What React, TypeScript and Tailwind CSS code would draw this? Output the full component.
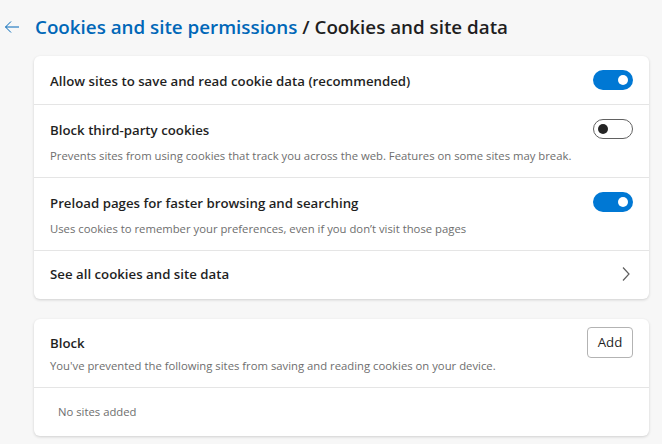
function Toggle({ on }: { on: boolean }) {
  return on ? (
    <div className="flex h-[20px] w-[40px] shrink-0 items-center justify-end rounded-full bg-[#0078d4] pr-[5px]">
      <div className="h-[10px] w-[10px] rounded-full bg-white" />
    </div>
  ) : (
    <div className="flex h-[20px] w-[40px] shrink-0 items-center rounded-full border border-[#616161] bg-white pl-[4px]">
      <div className="h-[10px] w-[10px] rounded-full bg-[#242424]" />
    </div>
  );
}

function Row({
  title,
  desc,
  on,
}: {
  title: string;
  desc?: string;
  on: boolean;
}) {
  return (
    <div
      className={
        desc
          ? "flex items-start justify-between border-b border-[#e5e5e5] px-4 pb-[13px] pt-[14px]"
          : "flex items-start justify-between border-b border-[#e5e5e5] px-4 pb-[12px] pt-[14px]"
      }
    >
      <div>
        <div className="text-[13.25px] font-semibold leading-[22px] text-[#1f1f1f]">
          {title}
        </div>
        {desc && (
          <div className="mt-[7px] text-[11.3px] leading-[16px] text-[#6e6e6e]">
            {desc}
          </div>
        )}
      </div>
      <Toggle on={on} />
    </div>
  );
}

export default function App() {
  return (
    <div
      className="h-[444px] w-full overflow-hidden bg-[#f7f7f7] pt-[13px]"
      style={{ fontFamily: '"Open Sans", sans-serif' }}
    >
      <div className="flex items-center pl-[4px]">
        <svg width="16" height="16" viewBox="0 0 16 16" className="text-[#0067b8]">
          <path
            d="M15 8H1.5M7 2.5L1.5 8L7 13.5"
            stroke="currentColor"
            strokeWidth="1"
            fill="none"
          />
        </svg>
        <h1 className="ml-[15px] text-[18.8px] font-semibold leading-[28px] text-[#1f1f1f]">
          <span className="text-[#0067b8]">Cookies and site permissions</span> / Cookies and site data
        </h1>
      </div>

      <div className="ml-[34px] mr-[13px] mt-[15px] flex flex-col gap-[20px]">
        <div className="rounded-[6px] bg-white shadow-[0_1px_3px_rgba(0,0,0,0.16)]">
          <Row title="Allow sites to save and read cookie data (recommended)" on />
          <Row
            title="Block third-party cookies"
            desc="Prevents sites from using cookies that track you across the web. Features on some sites may break."
            on={false}
          />
          <Row
            title="Preload pages for faster browsing and searching"
            desc="Uses cookies to remember your preferences, even if you don’t visit those pages"
            on
          />
          <div className="flex h-[48px] items-center justify-between px-4">
            <div className="text-[13.25px] font-semibold text-[#1f1f1f]">
              See all cookies and site data
            </div>
            <svg width="8" height="14" viewBox="0 0 8 14" className="mb-[3px] mr-[3px] text-[#5f5f5f]">
              <path d="M1 0.5L7 7L1 13.5" stroke="currentColor" strokeWidth="1.2" fill="none" />
            </svg>
          </div>
        </div>

        <div className="rounded-[6px] bg-white shadow-[0_1px_3px_rgba(0,0,0,0.16)]">
          <div className="flex items-start justify-between border-b border-[#e5e5e5] px-4 pb-[13px] pt-[8px]">
            <div className="pt-[5px]">
              <div className="text-[13.25px] font-semibold leading-[22px] text-[#1f1f1f]">Block</div>
              <div className="mt-[4px] text-[11.3px] leading-[16px] text-[#6e6e6e]">
                You've prevented the following sites from saving and reading cookies on your device.
              </div>
            </div>
            <button className="h-[31px] w-[46px] shrink-0 rounded-[4px] border border-[#b3b3b3] bg-white text-[13.25px] text-[#1f1f1f]">
              Add
            </button>
          </div>
          <div className="flex h-[48px] items-center px-6 text-[11.3px] text-[#6e6e6e]">
            No sites added
          </div>
        </div>
      </div>
    </div>
  );
}
